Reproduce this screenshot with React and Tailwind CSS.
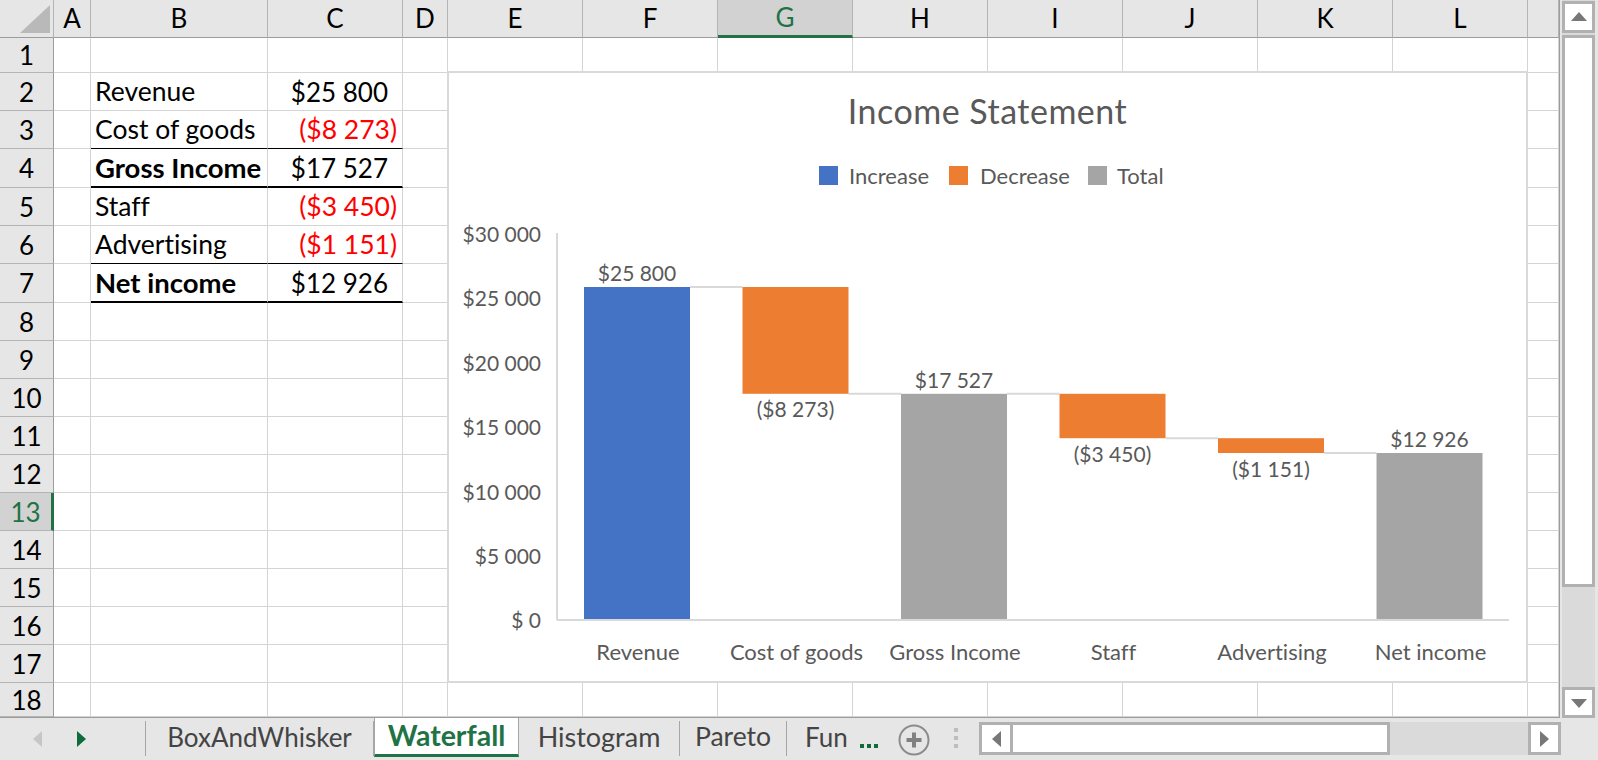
import React from 'react'

const columns = ['', 'A', 'B', 'C', 'D', 'E', 'F', 'G', 'H', 'I', 'J', 'K', 'L', '']

const table = {
  2: { b: 'Revenue', c: '$25 800' },
  3: { b: 'Cost of goods', c: '($8 273)', red: true, line: 'thin' },
  4: { b: 'Gross Income', c: '$17 527', bold: true, line: 'thick' },
  5: { b: 'Staff', c: '($3 450)', red: true },
  6: { b: 'Advertising', c: '($1 151)', red: true, line: 'thin' },
  7: { b: 'Net income', c: '$12 926', bold: true, line: 'thick' },
}

const lineClass = {
  thin: 'border-b border-b-black',
  thick: 'border-b-2 border-b-black',
}

const rows = Array.from({ length: 18 }, (_, i) => i + 1)

const ChartText = ({ x, y, size = 21, anchor = 'middle', spacing, children }) => (
  <text x={x} y={y} fontSize={size} textAnchor={anchor} letterSpacing={spacing} fill="#595959">{children}</text>
)

const bars = [
  { x: 584, top: 287, bottom: 620, color: '#4472c4', name: 'Revenue', value: '$25 800', labelY: 281 },
  { x: 742.5, top: 287, bottom: 393.8, color: '#ed7d31', name: 'Cost of goods', value: '($8 273)', labelY: 417 },
  { x: 901, top: 393.8, bottom: 620, color: '#a5a5a5', name: 'Gross Income', value: '$17 527', labelY: 388 },
  { x: 1059.5, top: 393.8, bottom: 438.2, color: '#ed7d31', name: 'Staff', value: '($3 450)', labelY: 462 },
  { x: 1218, top: 438.2, bottom: 453, color: '#ed7d31', name: 'Advertising', value: '($1 151)', labelY: 477 },
  { x: 1376.5, top: 453, bottom: 620, color: '#a5a5a5', name: 'Net income', value: '$12 926', labelY: 447 },
]

const connectors = [
  [690, 742.5, 287],
  [848.5, 901, 393.8],
  [1007, 1059.5, 393.8],
  [1165.5, 1218, 438.2],
  [1324, 1376.5, 453],
]

const ticks = ['$30 000', '$25 000', '$20 000', '$15 000', '$10 000', '$5 000', '$ 0']

const Chart = () => (
  <div className="absolute left-[447px] top-[71px] w-[1081px] h-[612px] bg-white border-2 border-[#d9d9d9]">
    <svg width="1077" height="608" viewBox="449 73 1077 608">
      <ChartText x={987.5} y={124} size={34} spacing={0.5}>Income Statement</ChartText>

      <rect x="819" y="166" width="19" height="19" fill="#4472c4" />
      <ChartText x={849} y={184} size={22} anchor="start">Increase</ChartText>
      <rect x="949" y="166" width="19" height="19" fill="#ed7d31" />
      <ChartText x={980} y={184} size={22} anchor="start">Decrease</ChartText>
      <rect x="1088" y="166" width="19" height="19" fill="#a5a5a5" />
      <ChartText x={1117} y={184} size={22} anchor="start">Total</ChartText>

      {ticks.map((t, i) => (
        <ChartText key={t} x={541} y={242 + i * 64.4} anchor="end">{t}</ChartText>
      ))}

      <line x1="557" y1="233" x2="557" y2="620" stroke="#d9d9d9" strokeWidth="2" />

      {connectors.map(([x1, x2, y]) => (
        <line key={x1} x1={x1} y1={y} x2={x2} y2={y} stroke="#d9d9d9" strokeWidth="2" />
      ))}

      {bars.map((b) => (
        <g key={b.name}>
          <rect x={b.x} y={b.top} width="106" height={b.bottom - b.top} fill={b.color} />
          <ChartText x={b.x + 53} y={b.labelY}>{b.value}</ChartText>
          <ChartText x={b.x + 54} y={660} size={22}>{b.name}</ChartText>
        </g>
      ))}

      <line x1="557" y1="620" x2="1509" y2="620" stroke="#d9d9d9" strokeWidth="2" />
    </svg>
  </div>
)

const Sheet = () => (
  <div className="relative w-[1560px] h-[718px] bg-white border-r border-b border-[#9c9c9c] grid grid-cols-[54px_37px_177px_135px_45px_repeat(8,135px)_31px] grid-rows-[38px_35px_38px_38px_39px_38px_38px_39px_38px_38px_38px_38px_38px_38px_38px_38px_38px_38px_34px]">
    {columns.map((col, i) => {
      if (i === 0) {
        return (
          <div key="corner" className="bg-[#e6e6e6] border-r border-r-[#b4b4b4] border-b border-b-[#9c9c9c]">
            <svg width="52" height="36"><polygon points="20,33 50,33 50,5" fill="#b9b9b9" /></svg>
          </div>
        )
      }
      if (col === 'G') {
        return (
          <div key={col} className="bg-[#d2d2d2] border-r border-r-[#b4b4b4] border-b-[3px] border-b-[#217346] text-[#217346] text-[26px] flex items-center justify-center">
            {col}
          </div>
        )
      }
      return (
        <div key={i} className="bg-[#e6e6e6] border-r border-r-[#b4b4b4] border-b border-b-[#9c9c9c] text-black text-[26px] flex items-center justify-center">
          {col}
        </div>
      )
    })}

    {rows.map((row) => {
      const data = table[row]
      return (
        <React.Fragment key={row}>
          {row === 13 ? (
            <div className="bg-[#d2d2d2] border-r-[3px] border-r-[#217346] border-b border-b-[#b4b4b4] text-[#217346] text-[26px] flex items-center justify-center pt-[1px]">
              {row}
            </div>
          ) : (
            <div className="bg-[#e6e6e6] border-r border-r-[#9c9c9c] border-b border-b-[#b4b4b4] text-black text-[26px] flex items-center justify-center pt-[1px]">
              {row}
            </div>
          )}
          {columns.slice(1).map((col, i) => {
            const isData = data && (col === 'B' || col === 'C')
            const border = isData && data.line ? lineClass[data.line] : 'border-b border-b-[#d4d4d4]'
            if (!isData) {
              return <div key={i} className={`border-r border-r-[#d4d4d4] ${border}`} />
            }
            if (col === 'B') {
              return (
                <div key={i} className={`border-r border-r-[#d4d4d4] ${border} pl-[4px] pt-[1px] flex items-center text-black whitespace-nowrap ${data.bold ? 'font-bold text-[27.5px]' : 'text-[26.5px]'}`}>
                  {data.b}
                </div>
              )
            }
            return (
              <div key={i} className={`border-r border-r-[#d4d4d4] ${border} pt-[1px] flex items-center justify-end whitespace-nowrap ${data.red ? 'pr-[5px] text-[#ff0000] text-[26.5px]' : 'pr-[14px] text-black text-[26px]'}`}>
                {data.c}
              </div>
            )
          })}
        </React.Fragment>
      )
    })}

    <Chart />
  </div>
)

const ScrollButton = ({ points, className }) => (
  <div className={`bg-white border-[3px] border-[#b1b1b1] flex items-center justify-center shrink-0 ${className}`}>
    <svg width="16" height="16"><polygon points={points} fill="#777777" /></svg>
  </div>
)

const VerticalScroll = () => (
  <div className="w-[33px] ml-[2px] h-[718px] flex flex-col pt-[1px] bg-[#dadada]">
    <ScrollButton points="0,12 16,12 8,3" className="h-[32px]" />
    <div className="h-[552px] mt-[2px] bg-white border-[3px] border-[#b1b1b1] shrink-0" />
    <div className="flex-1" />
    <ScrollButton points="0,4 16,4 8,13" className="h-[31px]" />
  </div>
)

const Tab = ({ w, size, children }) => (
  <div className={`${w} ${size} h-[35px] mt-[3px] pb-[3px] border-r border-[#a6a6a6] flex items-center justify-center text-[#444444] whitespace-nowrap`}>
    {children}
  </div>
)

const TabBar = () => (
  <div className="flex-1 flex">
    <div className="w-[146px] h-[35px] mt-[3px] border-r border-[#a6a6a6] flex items-center pl-[33px] gap-[35px]">
      <svg width="9" height="16"><polygon points="9,0 9,16 0,8" fill="#c6c6c6" /></svg>
      <svg width="9" height="16"><polygon points="0,0 0,16 9,8" fill="#0f6b3a" /></svg>
    </div>
    <Tab w="w-[228px]" size="text-[26px]">BoxAndWhisker</Tab>
    <div className="w-[145px] h-[40px] -mt-[1px] bg-white border-x border-x-[#a6a6a6] border-b-[3px] border-b-[#217346] flex items-center justify-center text-[28.5px] font-bold text-[#217346]">
      Waterfall
    </div>
    <Tab w="w-[161px]" size="text-[27px]">Histogram</Tab>
    <Tab w="w-[107px]" size="text-[26.5px]">Pareto</Tab>
    <div className="w-[73px] h-[35px] mt-[3px] pb-[3px] pl-[18px] text-[26px] text-[#444444] flex items-center">Fun</div>
    <div className="w-[21px] mt-[26px] flex gap-[3px] h-[4px]">
      <span className="w-[4px] h-[4px] bg-[#0f6b3a]" />
      <span className="w-[4px] h-[4px] bg-[#0f6b3a]" />
      <span className="w-[4px] h-[4px] bg-[#0f6b3a]" />
    </div>
    <svg width="32" height="32" viewBox="0 0 32 32" className="ml-[17px] mt-[6px]">
      <circle cx="16" cy="16" r="14.5" fill="none" stroke="#8c8c8c" strokeWidth="2" />
      <path d="M16 8.5v15M8.5 16h15" stroke="#808080" strokeWidth="4" />
    </svg>
    <div className="ml-[24px] mt-[10px] flex flex-col gap-[4px]">
      <span className="w-[4px] h-[4px] bg-[#bdbdbd]" />
      <span className="w-[4px] h-[4px] bg-[#bdbdbd]" />
      <span className="w-[4px] h-[4px] bg-[#bdbdbd]" />
    </div>
    <div className="ml-[21px] w-[582px] h-[33px] mt-[4px] flex bg-[#dadada]">
      <div className="w-[34px] bg-white border-[3px] border-[#b1b1b1] flex items-center justify-center">
        <svg width="9" height="16"><polygon points="9,0 9,16 0,8" fill="#777777" /></svg>
      </div>
      <div className="w-[380px] -ml-[3px] bg-white border-[3px] border-[#b1b1b1]" />
      <div className="flex-1" />
      <div className="w-[33px] bg-white border-[3px] border-[#b1b1b1] flex items-center justify-center">
        <svg width="9" height="16"><polygon points="0,0 0,16 9,8" fill="#777777" /></svg>
      </div>
    </div>
  </div>
)

const App = () => (
  <div className="w-[1598px] h-[760px] flex flex-col bg-[#e6e6e6] overflow-hidden font-[Lato,sans-serif] [font-variant-ligatures:none]">
    <div className="flex">
      <Sheet />
      <VerticalScroll />
    </div>
    <TabBar />
  </div>
)

export default App
